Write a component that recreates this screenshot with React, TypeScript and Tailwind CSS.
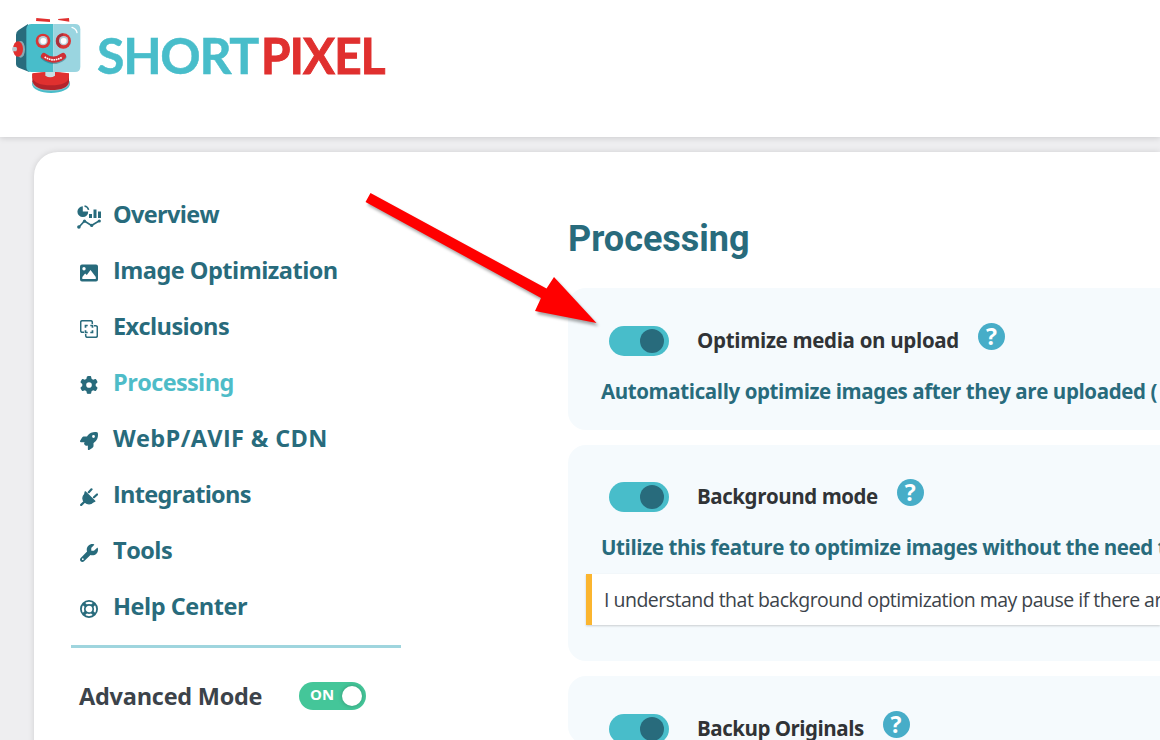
import React from "react";
import { FaGear, FaRocket, FaWrench } from "react-icons/fa6";

const RobotLogo = () => (
  <svg viewBox="30 30 219 240" className="h-20 w-[73px] shrink-0">
    <ellipse cx="153" cy="236" rx="57" ry="28" fill="#48bdca" />
    <ellipse cx="153" cy="234" rx="56" ry="24" fill="#8fb9c2" />
    <path d="M97 207q56-10 110 0v24q-5 24-54 24t-56-26z" fill="#b4232a" />
    <path d="M97 205q56-10 110 0v12q-4 24-54 24t-56-24z" fill="#e0302f" />
    <path d="M136 197h29v15q-14 10-29 0z" fill="#c9dfe4" />
    <path d="M84 57 56 75q-8 5-8 14v89q0 7 8 10l32 13z" fill="#286b7c" />
    <path d="M95 57h65v144H95q-16 0-16-16V73q0-16 16-16z" fill="#48bdca" />
    <path d="M160 57h65q16 0 16 16v112q0 16-16 16h-65z" fill="#9ad5e0" />
    <ellipse cx="62" cy="133" rx="13" ry="25" fill="#8aa9b2" />
    <ellipse cx="54" cy="132" rx="15" ry="23" fill="#e0302f" />
    <path d="M38 126h11q5 6 0 13H38q-4-6 0-13z" fill="#b8c8cf" />
    <path d="m109 39 41 4v8l-42-3z" fill="#e0302f" />
    <path d="m174 42 33-3 1 11-33-5z" fill="#e0302f" />
    <circle cx="129" cy="108" r="22" fill="#d93636" />
    <circle cx="129" cy="107" r="14" fill="#b8cdd6" />
    <circle cx="130" cy="108" r="9" fill="#fff" />
    <circle cx="190" cy="108" r="23" fill="#d93636" />
    <path d="M190 85a23 23 0 0 0-10 43z" fill="#aa303b" />
    <circle cx="191" cy="107" r="14" fill="#b8cdd6" />
    <circle cx="191" cy="108" r="9" fill="#fff" />
    <path
      d="M132 153q28 22 57 0"
      fill="none"
      stroke="#286b7c"
      strokeOpacity=".5"
      strokeWidth="20"
      strokeLinecap="round"
      transform="translate(0 3)"
    />
    <path
      d="M132 153q28 22 57 0"
      fill="none"
      stroke="#cf2f35"
      strokeWidth="18"
      strokeLinecap="round"
    />
    <path
      d="M134 156q27 17 53 0"
      fill="none"
      stroke="#fff"
      strokeWidth="5"
      strokeDasharray="5 2"
    />
    <path
      d="M216 67q13 4 15 16"
      fill="none"
      stroke="#fff"
      strokeWidth="4"
      strokeLinecap="round"
    />
  </svg>
);

const OverviewIcon = () => (
  <svg viewBox="0 0 24 24" className="size-6" fill="currentColor">
    <path d="M5.800 1.300v5.200h5.400A5.400 5.400 0 1 1 5.800 1.300z" />
    <path
      d="M7.500.9A5.200 5.200 0 0 1 11.600 4.800"
      fill="none"
      stroke="currentColor"
      strokeWidth="1.500"
    />
    <path d="M12 9h3v4h-3zM16.500 4.500h3V13h-3zM21 6.500h3V13h-3z" />
    <path
      d="m2 22 5.500-6 7 4.500 7.500-4.500"
      fill="none"
      stroke="currentColor"
      strokeWidth="1.700"
    />
    <circle cx="1.900" cy="22" r="1.800" />
    <circle cx="7.500" cy="16.200" r="1.600" />
    <circle cx="14.700" cy="20.400" r="1.600" />
    <circle cx="22.300" cy="16" r="1.600" />
  </svg>
);

const ImageIcon = () => (
  <svg viewBox="0 0 18 18" className="size-[18px]" fill="currentColor">
    <path
      fillRule="evenodd"
      d="M2 .5h14a2 2 0 0 1 2 2v13a2 2 0 0 1-2 2H2a2 2 0 0 1-2-2v-13a2 2 0 0 1 2-2zM4 3a1.700 1.700 0 1 0 0 3.400A1.700 1.700 0 0 0 4 3zM2.300 15h13.500v-2L10.500 6l-3.700 5-1.700-1.500-2.800 3.500z"
    />
  </svg>
);

const ExclusionsIcon = () => (
  <svg
    viewBox="0 0 18 18"
    className="size-[18px]"
    fill="none"
    stroke="currentColor"
    strokeWidth="1.500"
  >
    <path d="M4 12.300H2.200A1.500 1.500 0 0 1 .7 10.800V2.200A1.500 1.500 0 0 1 2.200.7h8.600a1.500 1.500 0 0 1 1.500 1.500V4" />
    <path d="M14 5.700h1.800a1.500 1.500 0 0 1 1.500 1.500v8.600a1.500 1.500 0 0 1-1.500 1.500H7.200a1.500 1.500 0 0 1-1.500-1.500V14" />
    <path
      d="M5.500 7.700V5.500h2.200M10.300 5.500h2.200v2.200M12.500 10.300v2.200h-2.200M7.700 12.500H5.500v-2.200"
      strokeWidth="1.700"
    />
  </svg>
);

const PlugIcon = () => (
  <svg
    viewBox="0 0 18 18"
    className="size-[18px]"
    fill="currentColor"
    stroke="currentColor"
    strokeLinecap="round"
  >
    <path
      d="m5.200 3.800 9.600 9.400-1.500.7c-2.100 2-5.500 2.600-8.300.4-2.600-2.500-2.400-5.800-.2-8.200z"
      strokeWidth="1.300"
      strokeLinejoin="round"
    />
    <path d="M1.200 16.900 5 13.200M8.800 4.200l2.700-2.900M14 9.200l3-2.700" strokeWidth="2.200" />
  </svg>
);

const LifeRingIcon = () => (
  <svg
    viewBox="0 0 18 18"
    className="size-[18px]"
    fill="none"
    stroke="currentColor"
  >
    <circle cx="9" cy="9" r="8.100" strokeWidth="1.800" />
    <circle cx="9" cy="9" r="4.200" strokeWidth="1.700" />
    <path
      d="m3.300 3.300 2.900 2.900M14.700 3.300l-2.900 2.900M3.300 14.700l2.900-2.900M14.700 14.700l-2.900-2.900"
      strokeWidth="3.300"
    />
  </svg>
);

const menu = [
  { label: "Overview", icon: <OverviewIcon />, spacing: "tracking-[-0.65px]" },
  { label: "Image Optimization", icon: <ImageIcon />, spacing: "tracking-[-0.52px]" },
  { label: "Exclusions", icon: <ExclusionsIcon />, spacing: "tracking-[-0.6px]" },
  {
    label: "Processing",
    icon: <FaGear className="size-[18px]" />,
    spacing: "tracking-[-0.6px]",
    active: true,
  },
  {
    label: "WebP/AVIF & CDN",
    icon: <FaRocket className="size-[18px]" />,
    spacing: "tracking-[0.35px]",
  },
  { label: "Integrations", icon: <PlugIcon />, spacing: "tracking-[-0.7px]" },
  {
    label: "Tools",
    icon: <FaWrench className="size-[18px]" />,
    spacing: "tracking-[-0.45px]",
  },
  { label: "Help Center", icon: <LifeRingIcon />, spacing: "tracking-[-0.45px]" },
];

const Sidebar = () => (
  <aside className="ml-[37px] w-[330px] shrink-0 pt-[35px]">
    <nav>
      {menu.map((item) => (
        <a
          key={item.label}
          className={`flex h-14 items-center text-[23.500px] font-bold whitespace-nowrap ${item.spacing}`}
        >
          <span className="mt-[3px] flex w-9 justify-center text-[#286b7c]">
            {item.icon}
          </span>
          <span
            className={
              item.active ? "ml-[6px] text-[#4ebcc8]" : "ml-[6px] text-[#286b7c]"
            }
          >
            {item.label}
          </span>
        </a>
      ))}
    </nav>
    <div className="mt-[10px] h-[3px] bg-[#9fd5de]" />
    <div className="mt-[34px] flex h-7 items-center pl-2">
      <span className="mt-0.5 w-[220px] text-[23.500px] font-bold tracking-[-0.250px] whitespace-nowrap text-[#3c434a]">
        Advanced Mode
      </span>
      <span className="flex h-7 w-[67px] items-center justify-between rounded-full bg-[#44c699] pr-1 pl-[11px] text-[15px] font-bold text-white">
        <span className="-mt-[3px]">ON</span>
        <span className="size-5 rounded-full bg-white shadow-[0_0_4px_rgba(0,0,0,0.25)]" />
      </span>
    </div>
  </aside>
);

interface SettingProps {
  title: string;
  info?: string;
  spacing: string;
  className: string;
  children?: React.ReactNode;
}

const Setting = ({ title, info, spacing, className, children }: SettingProps) => (
  <section className={`w-[592px] rounded-l-[18px] bg-[#f5fafd] ${className}`}>
    <div className="flex h-[30px] items-center pl-[41px]">
      <span className="flex h-[30px] w-[60px] items-center justify-end rounded-full bg-[#48bdca] pr-[5px]">
        <span className="size-6 rounded-full bg-[#286b7c]" />
      </span>
      <h3
        className={`-mt-0.5 ml-7 text-[20.500px] font-bold whitespace-nowrap text-[#303336] ${spacing}`}
      >
        {title}
      </h3>
      <span className="mb-[9px] ml-[19px] flex size-[27px] items-center justify-center rounded-full bg-[#47adc8] text-[23px] leading-none font-bold text-white">
        ?
      </span>
    </div>
    {info && (
      <p className="mt-5 h-[31px] pl-[33px] text-[20.500px] leading-[30px] font-bold tracking-[-0.400px] whitespace-nowrap text-[#286b7c]">
        {info}
      </p>
    )}
    {children}
  </section>
);

const Arrow = () => (
  <svg
    viewBox="0 0 250 150"
    className="pointer-events-none absolute top-[185px] left-[360px] h-[150px] w-[250px] drop-shadow-[2px_3px_1.500px_rgba(0,0,0,0.35)]"
  >
    <path
      d="M10.500 8 186.500 103.500 194 92l42.500 46-61.500-12 6-13L5.500 17z"
      fill="#f00"
    />
  </svg>
);

const App = () => {
  return (
    <div className="relative flex h-[740px] w-[1160px] flex-col overflow-hidden bg-[#eeeef0] font-['Open_Sans','Noto_Sans',sans-serif] [font-feature-settings:'ss02']">
      <header className="flex h-[137px] shrink-0 items-start bg-white pt-[15px] pl-[10px] shadow-[0_1px_6px_rgba(0,0,0,0.15)]">
        <RobotLogo />
        <div className="mt-[10px] ml-[14px] flex font-['Lato',sans-serif] text-[50px] leading-[60px] font-bold">
          <span className="w-[164px] tracking-[-1.300px] text-[#48bdca] [-webkit-text-stroke:0.500px_#48bdca]">
            SHORT
          </span>
          <span className="origin-left scale-x-[0.952] tracking-[-0.800px] text-[#e0302f] [-webkit-text-stroke:1px_#e0302f]">
            PIXEL
          </span>
        </div>
      </header>

      <main className="mt-[15px] ml-[34px] flex h-[700px] shrink-0 rounded-tl-[24px] bg-white shadow-[0_0_6px_rgba(0,0,0,0.13)]">
        <Sidebar />
        <div className="ml-[167px] pt-[62px]">
          <h2 className="font-['Roboto',sans-serif] text-[36px] leading-[50px] font-bold text-[#286b7c]">
            Processing
          </h2>
          <div className="mt-6 flex flex-col gap-[15px]">
            <Setting
              title="Optimize media on upload"
              info="Automatically optimize images after they are uploaded ("
              spacing="tracking-[-0.32px]"
              className="h-[142px] pt-[38px]"
            />
            <Setting
              title="Background mode"
              info="Utilize this feature to optimize images without the need t"
              spacing="tracking-[-0.45px]"
              className="h-[216px] pt-[37px]"
            >
              <div className="mt-[11px] ml-[18px] h-[51px] border-l-[6px] border-[#fbb52f] bg-white pl-3 text-[19.500px] leading-[51px] tracking-[-0.510px] whitespace-nowrap text-[#3c434a] shadow-[0_1px_2px_rgba(0,0,0,0.18)]">
                I understand that background optimization may pause if there ar
              </div>
            </Setting>
            <Setting
              title="Backup Originals"
              spacing="tracking-[-0.5px]"
              className="pt-[38px]"
            />
          </div>
        </div>
      </main>

      <Arrow />
    </div>
  );
};

export default App;
